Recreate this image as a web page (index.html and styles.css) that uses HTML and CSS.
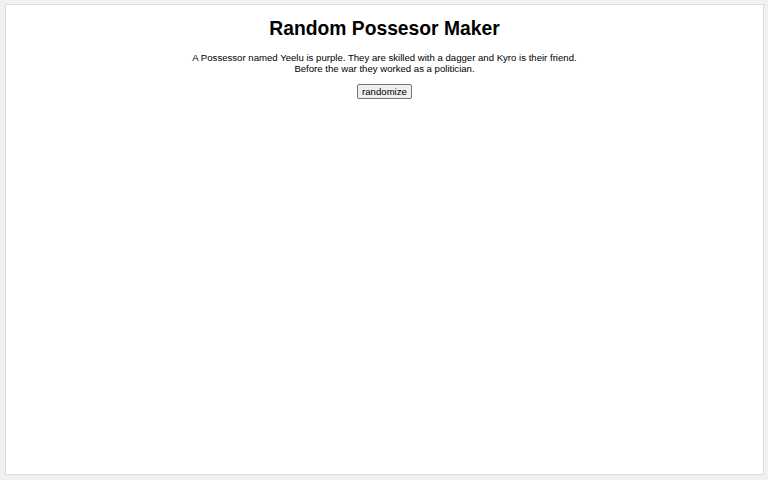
FILE: index.html
```html
<!DOCTYPE html>
<html lang="en">
<head>
<meta charset="UTF-8" />
<meta name="viewport" content="width=device-width, initial-scale=1" />
<title>Random Possesor Maker</title>
<link rel="stylesheet" href="styles.css">
</head>
<body>

<div class="page">
  <h1 class="title">Random Possesor Maker</h1>
  <p class="story">A Possessor named Yeelu is purple. They are skilled with a dagger and Kyro is their friend.<br>Before the war they worked as a politician.</p>
  <button class="randomize" type="button">randomize</button>
</div>

</body>
</html>
```
FILE: styles.css
```css
html, body {
  margin: 0; padding: 0;
  background: #f1f1f1;
  font-family: "Liberation Sans", Arial, sans-serif;
}
body {
  padding: 4px 4px 4px 5px;
}
.page {
  height: 471px;
  background: #fff;
  border: 1px solid #dcdcdc;
  text-align: center;
  box-sizing: border-box;
}
.title {
  margin: 12px 0 0;
  font-size: 19.3px;
  line-height: 23px;
}
.story {
  margin: 12px 0 0;
  font-size: 9.6px;
  line-height: 11px;
}
.randomize {
  margin-top: 10px;
  font-family: "Liberation Sans", Arial, sans-serif;
  font-size: 9.6px;
  padding: 1px 4px;
  background: #efefef;
  border: 1px solid #767676;
  border-radius: 2px;
}
```
